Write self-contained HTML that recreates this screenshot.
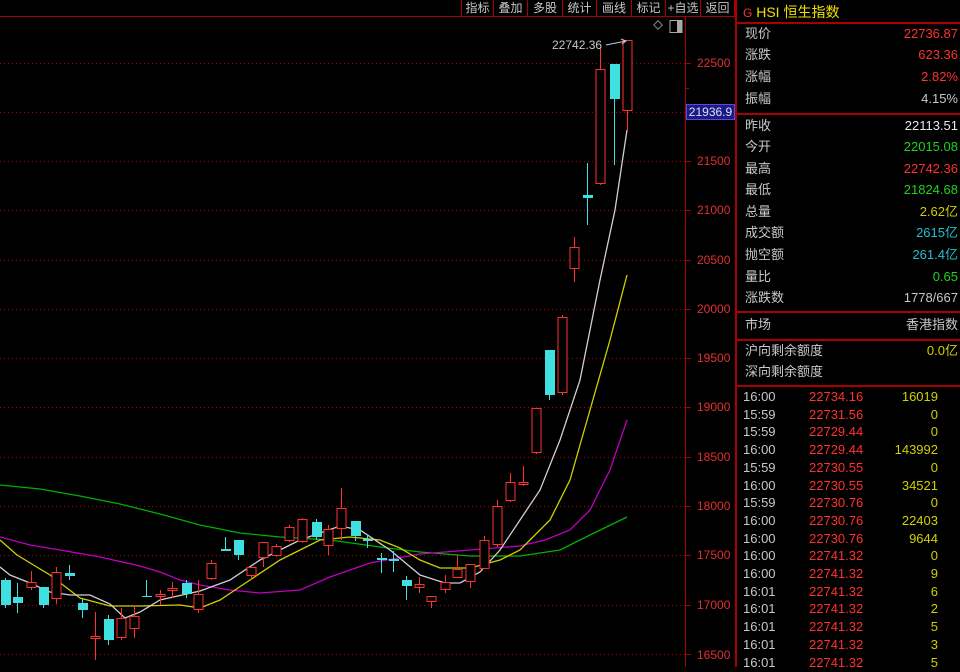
<!DOCTYPE html>
<html><head><meta charset="utf-8"><style>
*{margin:0;padding:0;box-sizing:border-box}
body{width:960px;height:667px;background:#000;overflow:hidden;position:relative;font-family:"Liberation Sans","Noto Sans CJK SC",sans-serif;color:#c8c8c8}
.tb{position:absolute;top:0;height:17px;border-right:1px solid #a00;border-bottom:1px solid #a00;font-size:12px;line-height:16px;text-align:center;color:#c8c8c8}
.ax{position:absolute;left:697px;font-size:12px;color:#e03030}
#rp{position:absolute;left:735px;top:0;width:225px;height:667px;border-left:2px solid #a00}
.hl{position:absolute;left:0;width:225px;height:2px;background:#a00}
.r{position:absolute;left:8px;width:213px;font-size:13px;height:18px;line-height:18px}
.r span{position:absolute;right:0}
.t{position:absolute;left:6px;font-size:13px;height:18px;line-height:18px;width:215px}
.t b{font-weight:normal;position:absolute}
</style></head><body>
<div style="position:absolute;left:0;top:16px;width:461px;height:1px;background:#a00"></div>
<div class="tb" style="left:461px;width:33px;border-left:1px solid #a00">指标</div>
<div class="tb" style="left:494px;width:34px">叠加</div>
<div class="tb" style="left:528px;width:35px">多股</div>
<div class="tb" style="left:563px;width:34px">统计</div>
<div class="tb" style="left:597px;width:35px">画线</div>
<div class="tb" style="left:632px;width:34px">标记</div>
<div class="tb" style="left:666px;width:35px">+自选</div>
<div class="tb" style="left:701px;width:34px">返回</div>
<svg style="position:absolute;left:0;top:0" width="735" height="667">
<g stroke="#a00" stroke-dasharray="1,3" stroke-width="1">
<line x1="0" y1="63.5" x2="685" y2="63.5"/><line x1="0" y1="112.5" x2="685" y2="112.5"/><line x1="0" y1="161.5" x2="685" y2="161.5"/><line x1="0" y1="210.5" x2="685" y2="210.5"/><line x1="0" y1="260.5" x2="685" y2="260.5"/><line x1="0" y1="309.5" x2="685" y2="309.5"/><line x1="0" y1="358.5" x2="685" y2="358.5"/><line x1="0" y1="407.5" x2="685" y2="407.5"/><line x1="0" y1="457.5" x2="685" y2="457.5"/><line x1="0" y1="506.5" x2="685" y2="506.5"/><line x1="0" y1="555.5" x2="685" y2="555.5"/><line x1="0" y1="605.5" x2="685" y2="605.5"/><line x1="0" y1="654.5" x2="685" y2="654.5"/>
</g>
<line x1="685.5" y1="17" x2="685.5" y2="667" stroke="#a00"/>
<g stroke="#a00"><line x1="686" y1="63.5" x2="691" y2="63.5"/><line x1="686" y1="88.5" x2="689" y2="88.5"/><line x1="686" y1="161.5" x2="691" y2="161.5"/><line x1="686" y1="210.5" x2="691" y2="210.5"/><line x1="686" y1="260.5" x2="691" y2="260.5"/><line x1="686" y1="309.5" x2="691" y2="309.5"/><line x1="686" y1="358.5" x2="691" y2="358.5"/><line x1="686" y1="407.5" x2="691" y2="407.5"/><line x1="686" y1="457.5" x2="691" y2="457.5"/><line x1="686" y1="506.5" x2="691" y2="506.5"/><line x1="686" y1="555.5" x2="691" y2="555.5"/><line x1="686" y1="605.5" x2="691" y2="605.5"/><line x1="686" y1="654.5" x2="691" y2="654.5"/></g>
<rect x="655" y="22" width="6" height="6" transform="rotate(45 658 25)" fill="none" stroke="#888"/>
<rect x="670" y="20.5" width="12" height="12" fill="none" stroke="#aaa"/><rect x="677" y="21" width="5" height="11" fill="#aaa"/>
<g fill="none" stroke-width="1.3">
<polyline stroke="#00b000" points="0,485 40,489 80,496 120,504 160,514 200,525 240,533 280,537 330,540 380,547 420,552 470,556 520,556 560,550 590,535 627,517"/>
<polyline stroke="#c000c0" points="0,537 30,545 60,550 100,557 140,566 160,572 180,580 200,585 230,590 260,593 300,590 330,577 370,563 420,554 470,550 520,546 545,540 570,530 590,510 610,470 627,420"/>
<polyline stroke="#d0d000" points="0,540 17,555 50,575 80,598 110,606 140,606 180,605 200,608 220,600 250,580 280,560 320,540 350,537 380,540 400,548 420,560 440,568 470,568 500,560 520,550 550,520 570,480 590,410 610,340 627,275"/>
<polyline stroke="#d0d0d0" points="0,567 10,575 30,583 50,592 70,595 90,595 110,604 125,618 140,612 160,600 200,591 230,580 260,560 300,540 340,526 360,530 390,550 420,575 445,583 460,583 480,572 500,550 520,520 540,490 560,440 580,380 600,280 615,210 627,130"/>
</g>
<g id="c" stroke-width="1"></g>
<text x="552" y="49" fill="#c8c8c8" font-size="12" font-family="Liberation Sans">22742.36</text>
<polyline points="606,45 626,41" stroke="#c8c8c8" fill="none"/><polyline points="621,39 626,41 622,44" stroke="#c8c8c8" fill="none"/>
</svg>
<script>
var C=[[5,580,605,578,608,0],[17,597,603,583,613,0],[31,582,587,571,590,1],[43,587,605,587,608,0],[56,572,598,567,604,1],[69,573,576,565,580,0],[82,603,610,598,618,0],[95,636,638,612,660,1],[108,619,640,615,645,0],[121,618,637,608,640,1],[134,616,628,605,638,1],[146,596,597,580,597,0],[160,594,596,590,605,1],[172,588,590,582,598,1],[186,583,594,580,598,0],[198,594,609,580,613,1],[211,563,578,560,580,1],[225,549,551,537,551,0],[238,540,555,540,560,0],[251,567,575,567,580,1],[263,542,557,542,567,1],[276,546,555,544,557,1],[289,527,540,525,542,1],[302,519,541,518,543,1],[316,522,537,519,540,0],[328,529,545,525,555,1],[341,508,528,488,540,1],[355,521,536,521,541,0],[367,539,541,535,548,0],[381,558,560,553,573,0],[393,559,561,551,572,0],[406,580,586,576,600,0],[419,584,587,577,593,1],[431,596,601,596,608,1],[445,582,589,575,593,1],[457,569,577,555,577,1],[470,564,581,564,588,1],[484,540,568,536,568,1],[497,506,544,500,547,1],[510,482,500,473,502,1],[523,482,484,466,486,1],[536,408,452,408,454,1],[549,350,395,350,400,0],[562,317,392,315,395,1],[574,247,268,237,282,1],[587,195,198,163,225,0],[600,69,183,47,185,1],[614,64,99,64,165,0],[627,40,110,40,130,1]];
var g=document.getElementById('c'),s='';
C.forEach(function(c){var x=c[0],col=c[5]?'#ff3030':'#40e0e0',w=9;
s+='<line x1="'+(x+.5)+'" y1="'+c[3]+'" x2="'+(x+.5)+'" y2="'+c[1]+'" stroke="'+col+'"/><line x1="'+(x+.5)+'" y1="'+c[2]+'" x2="'+(x+.5)+'" y2="'+c[4]+'" stroke="'+col+'"/>';
var h=Math.max(c[2]-c[1],1);
if(c[5])s+='<rect x="'+(x-4)+'" y="'+(c[1]+.5)+'" width="'+w+'" height="'+h+'" fill="#000" stroke="'+col+'"/>';
else s+='<rect x="'+(x-4)+'" y="'+c[1]+'" width="'+(w+1)+'" height="'+h+'" fill="'+col+'"/>';});
g.innerHTML=s;
</script>
<div class="ax" style="top:56px">22500</div>
<div class="ax" style="top:154px">21500</div>
<div class="ax" style="top:203px">21000</div>
<div class="ax" style="top:253px">20500</div>
<div class="ax" style="top:302px">20000</div>
<div class="ax" style="top:351px">19500</div>
<div class="ax" style="top:400px">19000</div>
<div class="ax" style="top:450px">18500</div>
<div class="ax" style="top:499px">18000</div>
<div class="ax" style="top:548px">17500</div>
<div class="ax" style="top:598px">17000</div>
<div class="ax" style="top:648px">16500</div>
<div style="position:absolute;left:686px;top:104px;width:49px;height:16px;background:#1a1a8c;border:1px solid #5050d0;color:#e0e0e0;font-size:12px;line-height:14px;text-align:center">21936.9</div>
<div id="rp">
<div style="position:absolute;left:6px;top:2px;font-size:14px;color:#f0e000"><span style="color:#ff3030;font-size:12px">G</span> HSI 恒生指数</div>
<div class="hl" style="top:22px"></div>
<div class="r" style="top:25px">现价<span style="color:#ff3030">22736.87</span></div>
<div class="r" style="top:46px">涨跌<span style="color:#ff3030">623.36</span></div>
<div class="r" style="top:68px">涨幅<span style="color:#ff3030">2.82%</span></div>
<div class="r" style="top:90px">振幅<span>4.15%</span></div>
<div class="hl" style="top:113px"></div>
<div class="r" style="top:117px">昨收<span style="color:#e8e8e8">22113.51</span></div>
<div class="r" style="top:138px">今开<span style="color:#20d020">22015.08</span></div>
<div class="r" style="top:160px">最高<span style="color:#ff3030">22742.36</span></div>
<div class="r" style="top:181px">最低<span style="color:#20d020">21824.68</span></div>
<div class="r" style="top:203px">总量<span style="color:#d0d000">2.62亿</span></div>
<div class="r" style="top:224px">成交额<span style="color:#20c0d0">2615亿</span></div>
<div class="r" style="top:246px">抛空额<span style="color:#20c0d0">261.4亿</span></div>
<div class="r" style="top:268px">量比<span style="color:#20d020">0.65</span></div>
<div class="r" style="top:289px">涨跌数<span>1778/667</span></div>
<div class="hl" style="top:311px"></div>
<div class="r" style="top:316px">市场<span>香港指数</span></div>
<div class="hl" style="top:339px"></div>
<div class="r" style="top:342px">沪向剩余额度<span style="color:#d0d000">0.0亿</span></div>
<div class="r" style="top:363px">深向剩余额度</div>
<div class="hl" style="top:385px"></div>
<div id="tk"></div>
</div>
<script>
var T=[["16:00","22734.16","16019"],["15:59","22731.56","0"],["15:59","22729.44","0"],["16:00","22729.44","143992"],["15:59","22730.55","0"],["16:00","22730.55","34521"],["15:59","22730.76","0"],["16:00","22730.76","22403"],["16:00","22730.76","9644"],["16:00","22741.32","0"],["16:00","22741.32","9"],["16:01","22741.32","6"],["16:01","22741.32","2"],["16:01","22741.32","5"],["16:01","22741.32","3"],["16:01","22741.32","5"]];
var h='';T.forEach(function(r,i){h+='<div class="t" style="top:'+(388+i*17.7)+'px"><b style="left:0">'+r[0]+'</b><b style="left:66px;color:#ff3030">'+r[1]+'</b><b style="width:80px;text-align:right;right:20px;color:#d0d000">'+r[2]+'</b></div>';});
document.getElementById('tk').innerHTML=h;
</script>
</body></html>
